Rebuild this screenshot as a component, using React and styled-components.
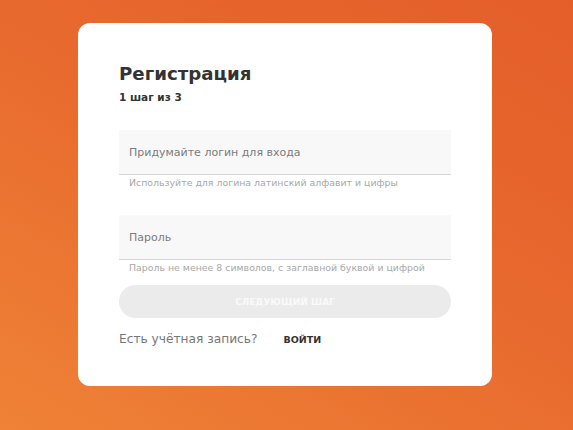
import React from 'react';
import styled, { createGlobalStyle } from 'styled-components';

const GlobalStyle = createGlobalStyle`
    html, body {
        margin: 0;
        padding: 0;
    }
    body {
        font-family: "DejaVu Sans", "Noto Sans", sans-serif;
    }
`;

function Field({ placeholder, hint, type }) {
    return (
        <FieldWrap>
            <Input type={type} placeholder={placeholder} />
            <Hint>{hint}</Hint>
        </FieldWrap>
    );
}

export default function App() {
    return (
        <>
            <GlobalStyle />
            <Page>
                <Card>
                    <Title>Регистрация</Title>
                    <Step>1 шаг из 3</Step>
                    <Fields>
                        <Field placeholder="Придумайте логин для входа" hint="Используйте для логина латинский алфавит и цифры" />
                        <Field type="password" placeholder="Пароль" hint="Пароль не менее 8 символов, с заглавной буквой и цифрой" />
                    </Fields>
                    <NextButton disabled>Следующий шаг</NextButton>
                    <Footer>
                        <span className="question">Есть учётная запись?</span>
                        <LoginLink href="#">Войти</LoginLink>
                    </Footer>
                </Card>
            </Page>
        </>
    );
}

const Page = styled.div`
    width: 100vw;
    height: 100vh;
    box-sizing: border-box;
    padding-top: 23px;
    padding-left: 78px;
    background: linear-gradient(30deg, #ef8236 0%, #e8692e 55%, #e45e2a 100%);
    overflow: hidden;
`;

const Card = styled.div`
    width: 414px;
    height: 363px;
    box-sizing: border-box;
    padding: 39px 41px 0;
    background: #fff;
    border-radius: 12px;
    display: flex;
    flex-direction: column;
`;

const Title = styled.h1`
    margin: 0;
    font-size: 18.2px;
    line-height: 24px;
    font-weight: bold;
    color: #333;
`;

const Step = styled.div`
    margin-top: 5px;
    font-size: 10.5px;
    font-weight: bold;
    color: #333;
`;

const Fields = styled.div`
    margin-top: 27px;
    display: flex;
    flex-direction: column;
    gap: 26px;
`;

const FieldWrap = styled.div`
    display: flex;
    flex-direction: column;
`;

const Input = styled.input`
    height: 45px;
    box-sizing: border-box;
    padding: 1px 10px 0;
    border: none;
    border-bottom: 1px solid #d6d6d6;
    background: #f8f8f8;
    font-family: inherit;
    font-size: 11px;
    color: #333;
    outline: none;

    &::placeholder {
        color: #7c7c7c;
    }
`;

const Hint = styled.span`
    margin-top: 2px;
    padding-left: 10px;
    font-size: 9.4px;
    line-height: 12px;
    color: #a8a8a8;
`;

const NextButton = styled.button`
    margin-top: 11px;
    height: 33px;
    border: none;
    border-radius: 17px;
    background: #ebebeb;
    color: #fafafa;
    font-family: inherit;
    font-size: 9px;
    font-weight: bold;
    text-transform: uppercase;
`;

const Footer = styled.div`
    margin-top: 14px;
    display: flex;
    align-items: center;

    .question {
        font-size: 12.2px;
        color: #777;
    }
`;

const LoginLink = styled.a`
    margin-left: 26px;
    font-size: 9.5px;
    font-weight: bold;
    color: #333;
    text-decoration: none;
    text-transform: uppercase;
`;
